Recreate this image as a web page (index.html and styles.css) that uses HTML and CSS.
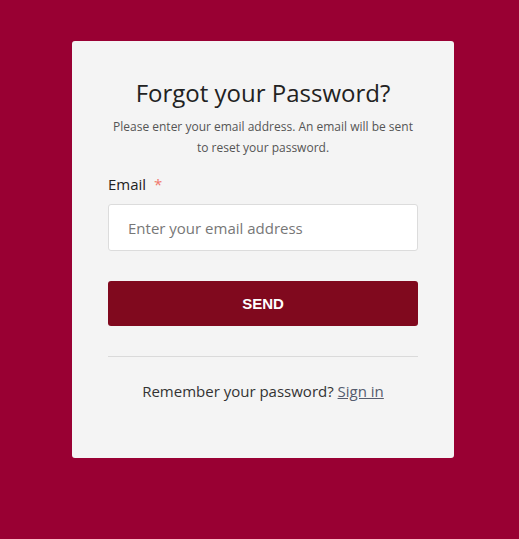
FILE: index.html
```html
<!DOCTYPE html>
<html lang="en">
<head>
  <meta charset="UTF-8" />
  <meta name="viewport" content="width=device-width, initial-scale=1.0"/>
  <title>Forgot your Password?</title>
  <link rel="stylesheet" href="styles.css">
</head>
<body>
  <div class="card">
    <h1>Forgot your Password?</h1>
    <p class="hint">Please enter your email address. An email will be sent<br>to reset your password.</p>

    <label class="field-label" for="email">Email <span class="req">*</span></label>
    <input type="email" id="email" class="field" placeholder="Enter your email address" />

    <button class="send-btn">SEND</button>

    <div class="divider"></div>

    <p class="footer">Remember your password? <a href="#">Sign in</a></p>
  </div>
</body>
</html>
```

FILE: styles.css
```css
body {
  margin: 0;
  padding: 41px 0 0 72px;
  background: #990033;
  font-family: "Open Sans", Arial, sans-serif;
  color: #222;
  min-height: 539px;
  box-sizing: border-box;
}

.card {
  width: 382px;
  height: 417px;
  box-sizing: border-box;
  background: #f4f4f4;
  border-radius: 3px;
  padding: 36px 36px 0;
  display: flex;
  flex-direction: column;
}

h1 {
  margin: 0;
  text-align: center;
  font-size: 24px;
  font-weight: 400;
  line-height: 32px;
  color: #222;
}

.hint {
  margin: 7px 0 0;
  text-align: center;
  font-size: 12px;
  line-height: 21px;
  color: #555;
}

.field-label {
  margin-top: 15px;
  font-size: 15px;
  line-height: 22px;
  color: #222;
}

.req {
  color: #f0776b;
  margin-left: 4px;
}

.field {
  margin-top: 9px;
  height: 47px;
  box-sizing: border-box;
  border: 1px solid #dcdcdc;
  border-radius: 3px;
  background: #fff;
  padding: 0 19px;
  font-family: "Open Sans", Arial, sans-serif;
  font-size: 15px;
  color: #333;
}

.field::placeholder {
  color: #777;
}

.send-btn {
  margin-top: 30px;
  height: 45px;
  border: none;
  border-radius: 3px;
  background: #80091e;
  color: #fff;
  font-family: "Liberation Sans", Arial, sans-serif;
  font-weight: bold;
  font-size: 15px;
  cursor: pointer;
}

.divider {
  margin-top: 30px;
  height: 1px;
  background: #dadada;
}

.footer {
  margin: 23px 0 0;
  text-align: center;
  font-size: 15px;
  line-height: 22px;
  color: #333;
}

.footer a {
  color: #555c6e;
}
```
